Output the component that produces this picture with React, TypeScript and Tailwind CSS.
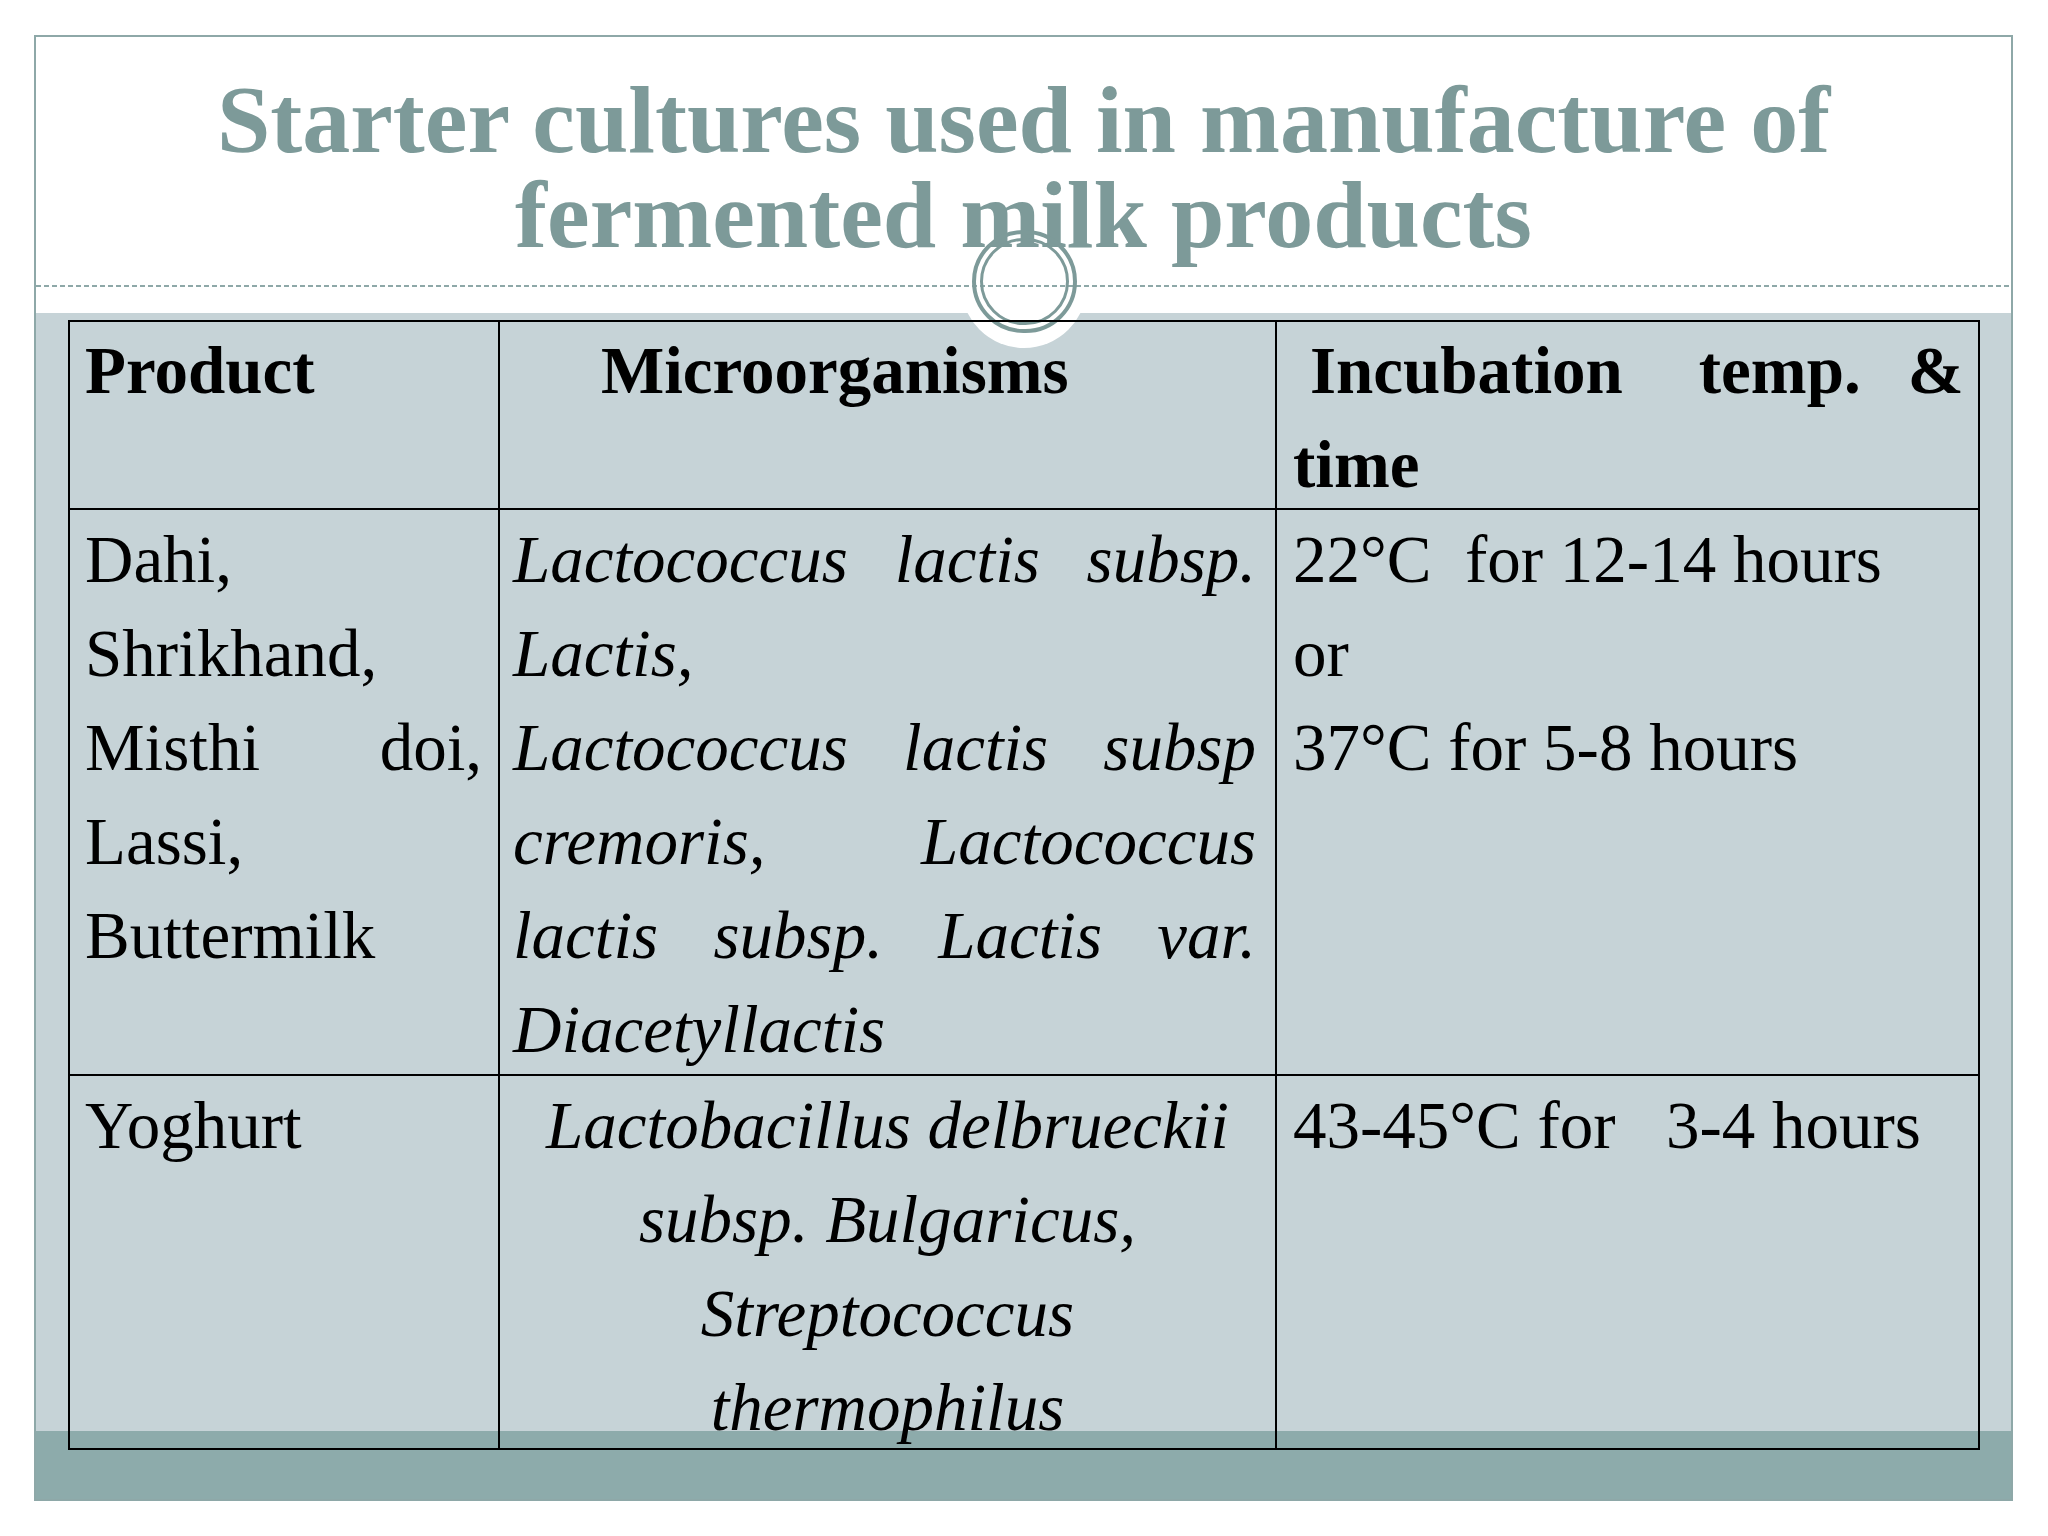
import React from 'react';

const serif = "font-['Liberation_Serif','Times_New_Roman',serif]";

// one line of a justified paragraph (last line stays left)
const Line = ({ text, justify }: { text: string; justify?: boolean }) => (
  <div
    className={
      justify
        ? 'whitespace-pre text-justify [text-align-last:justify]'
        : 'whitespace-pre'
    }
  >
    {text}
  </div>
);

const cell = 'border-black overflow-visible';

export default function App() {
  return (
    <div className="w-[2048px] h-[1536px] bg-white pt-[35px] pl-[34px]">
      <div className="relative w-[1979px] h-[1466px] border-2 border-[#8ea8a8] flex flex-col">
        {/* title area */}
        <div className="h-[276px] flex flex-col">
          <h1
            className={`${serif} pt-[35px] text-center text-[96px] leading-[95px] font-bold text-[#7d9a99]`}
          >
            Starter cultures used in manufacture of
            <br />
            fermented milk products
          </h1>
          <div className="mt-[23px] h-[2px] bg-[repeating-linear-gradient(to_right,#8ea8a8_0_5px,transparent_5px_8px)]" />
        </div>

        {/* content band */}
        <div className="relative flex-1 overflow-hidden bg-[linear-gradient(to_bottom,#c6d3d7_0,#c6d3d7_1118px,#8dabab_1118px)]">
          <div className="absolute left-[925px] top-[-91px] w-[126px] h-[126px] rounded-full bg-white" />

          <div
            className={`${serif} relative z-10 ml-[32px] mt-[7px] w-[1912px] border-2 border-black grid grid-cols-[430px_777px_701px] grid-rows-[188px_566px_372px] text-[67px] leading-[94px] text-black`}
          >
            {/* header */}
            <div className={`${cell} border-r-2 border-b-2 pl-[15px] pt-[1px] font-bold`}>
              Product
            </div>
            <div className={`${cell} border-r-2 border-b-2 pl-[101px] pt-[1px] font-bold`}>
              Microorganisms
            </div>
            <div className={`${cell} border-b-2 pl-[16px] pt-[1px] font-bold`}>
              <div className="flex pl-[17px] whitespace-pre">
                <span>Incubation</span>
                <span className="ml-[76px]">temp.</span>
                <span className="ml-[47px]">&amp;</span>
              </div>
              <Line text="time" />
            </div>

            {/* row 1 */}
            <div className={`${cell} border-r-2 border-b-2 pl-[15px] pr-[16px] pt-[2px]`}>
              <Line text="Dahi," />
              <Line text="Shrikhand," />
              <Line text="Misthi doi," justify />
              <Line text="Lassi," />
              <Line text="Buttermilk" />
            </div>
            <div className={`${cell} border-r-2 border-b-2 pl-[13px] pr-[19px] pt-[2px] italic`}>
              <Line text="Lactococcus lactis subsp." justify />
              <Line text="Lactis," />
              <Line text="Lactococcus lactis subsp" justify />
              <Line text="cremoris, Lactococcus" justify />
              <Line text="lactis subsp. Lactis var." justify />
              <Line text="Diacetyllactis" />
            </div>
            <div className={`${cell} border-b-2 pl-[16px] pt-[2px]`}>
              <Line text="22°C  for 12-14 hours" />
              <Line text="or" />
              <Line text="37°C for 5-8 hours" />
            </div>

            {/* row 2 */}
            <div className={`${cell} border-r-2 pl-[15px] pt-[2px]`}>
              <Line text="Yoghurt" />
            </div>
            <div className={`${cell} border-r-2 pt-[2px] italic text-center`}>
              <div>Lactobacillus delbrueckii</div>
              <div>subsp. Bulgaricus,</div>
              <div>Streptococcus</div>
              <div>thermophilus</div>
            </div>
            <div className={`${cell} pl-[16px] pt-[2px]`}>
              <Line text="43-45°C for   3-4 hours" />
            </div>
          </div>
        </div>

        {/* rings over the divider, under the table */}
        <div className="absolute left-[936px] top-[193px] w-[105px] h-[103px] rounded-full border-4 border-[#7d9a99]" />
        <div className="absolute left-[944px] top-[201px] w-[89px] h-[87px] rounded-full border-[3px] border-[#7d9a99]" />
      </div>
    </div>
  );
}
